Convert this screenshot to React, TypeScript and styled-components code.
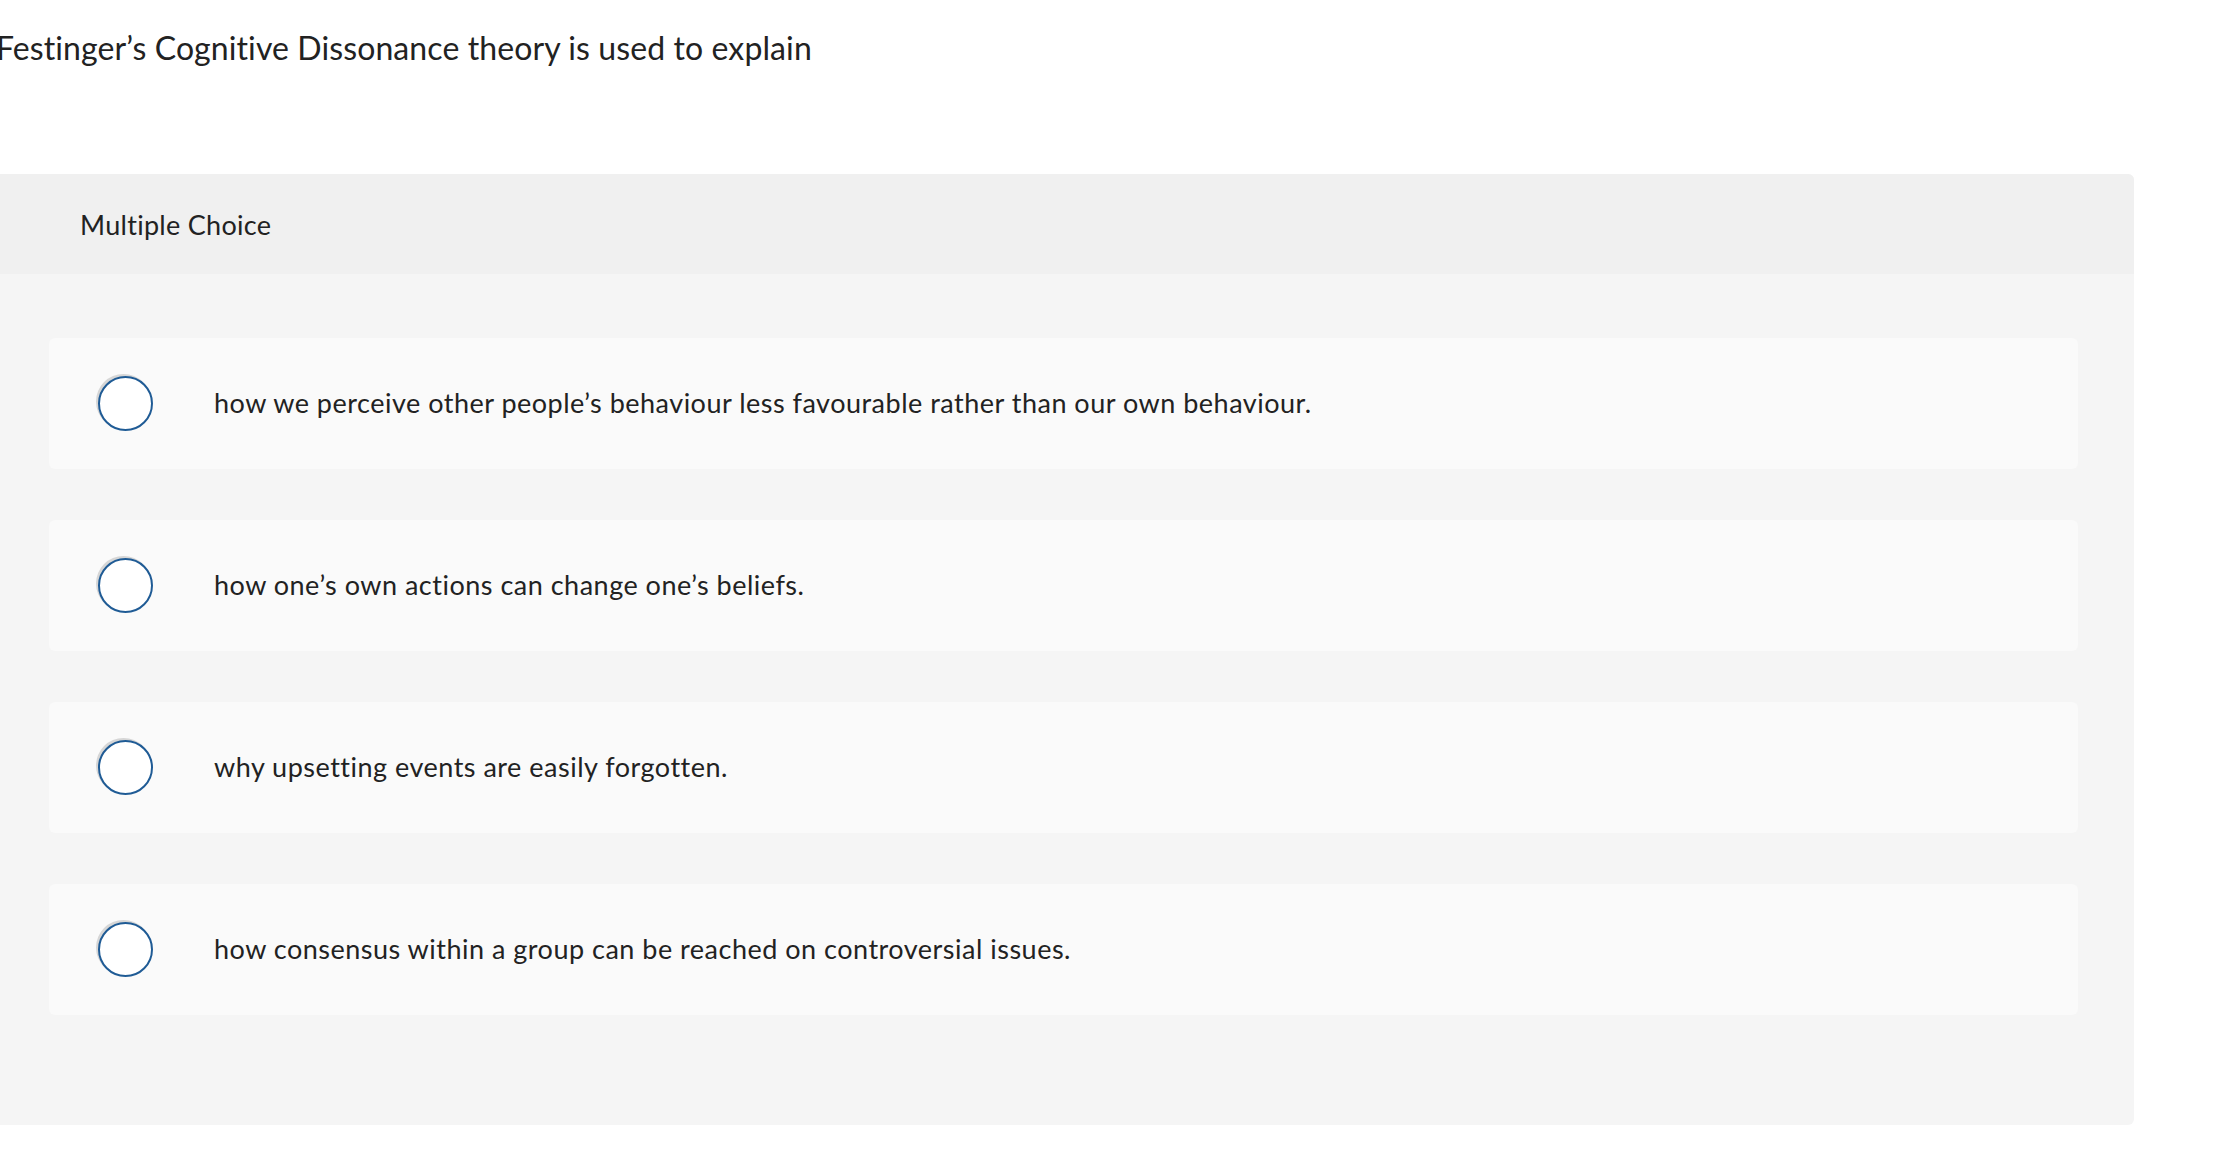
import styled, { createGlobalStyle } from 'styled-components';

const GlobalStyle = createGlobalStyle`
  html, body {
    margin: 0;
    padding: 0;
    background: #ffffff;
    overflow: hidden;
  }
  body {
    font-family: Lato, "Open Sans", "Liberation Sans", sans-serif;
    color: #222222;
  }
`;

const choices = [
  'how we perceive other people’s behaviour less favourable rather than our own behaviour.',
  'how one’s own actions can change one’s beliefs.',
  'why upsetting events are easily forgotten.',
  'how consensus within a group can be reached on controversial issues.',
];

export default function App() {
  return (
    <>
      <GlobalStyle />
      <Page>
        <Question>Festinger’s Cognitive Dissonance theory is used to explain</Question>
        <Panel>
          <PanelHeader>Multiple Choice</PanelHeader>
          <ChoiceList>
            {choices.map((text) => (
              <Choice key={text}>
                <Radio type="radio" name="answer" />
                <ChoiceText>{text}</ChoiceText>
              </Choice>
            ))}
          </ChoiceList>
        </Panel>
      </Page>
    </>
  );
}

const Page = styled.div`
  width: 2141px;
  margin-left: -7px;
  padding-top: 28px;
`;

const Question = styled.h1`
  margin: 0 0 0 3px;
  height: 146px;
  font-size: 32px;
  font-weight: 400;
  line-height: 40px;
  letter-spacing: 0.1px;
  color: #222222;
`;

const Panel = styled.section`
  background: #f5f5f5;
  border-radius: 0 6px 6px 0;
  overflow: hidden;
`;

const PanelHeader = styled.div`
  height: 100px;
  display: flex;
  align-items: center;
  padding-left: 87px;
  background: #f0f0f0;
  font-size: 27px;
  letter-spacing: 0.3px;
  color: #222222;
`;

const ChoiceList = styled.div`
  display: flex;
  flex-direction: column;
  gap: 51px;
  padding: 64px 56px 110px 56px;
`;

const Choice = styled.label`
  height: 131px;
  display: flex;
  align-items: center;
  padding-left: 49px;
  background: #fafafa;
  border-radius: 6px;
  cursor: pointer;
`;

const Radio = styled.input`
  appearance: none;
  margin: 0;
  width: 55px;
  height: 55px;
  flex-shrink: 0;
  border-radius: 50%;
  border: 2px solid #1f5b95;
  background: #ffffff;
  box-shadow: -2px -2px 0 0 #d6d6d6;
  cursor: pointer;
`;

const ChoiceText = styled.span`
  margin-left: 61px;
  margin-top: -2px;
  font-size: 27px;
  letter-spacing: 0.5px;
  color: #222222;
`;
